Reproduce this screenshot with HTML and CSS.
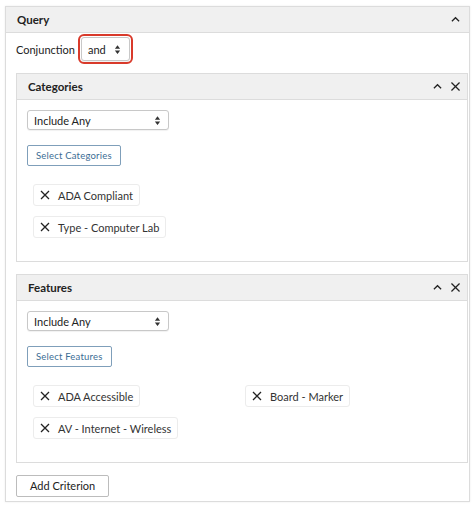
FILE: index.html
```html
<html>
	<head>
		<title>Query</title>
		<link rel="stylesheet" href="styles.css">
	</head>
	<body>
		<div class="panel outer">
			<div class="panel-head">
				<b>Query</b>
				<span class="tools">
					<svg class="ico" viewBox="0 0 10 10"><path d="M1 7 L5 3 L9 7"/></svg>
				</span>
			</div>
			<div class="outer-body">
				<div class="conj">
					<span>Conjunction</span>
					<span class="focus">
						<span class="select small">and <svg class="arrows" viewBox="0 0 8 12"><path d="M4 1 L7 5 L1 5 Z M4 11 L7 7 L1 7 Z"/></svg></span>
					</span>
				</div>

				<div class="panel inner">
					<div class="panel-head">
						<b>Categories</b>
						<span class="tools">
							<svg class="ico" viewBox="0 0 10 10"><path d="M1 7 L5 3 L9 7"/></svg>
							<svg class="ico" viewBox="0 0 10 10"><path d="M0.5 0.5 L9.5 9.5 M9.5 0.5 L0.5 9.5"/></svg>
						</span>
					</div>
					<div class="panel-body">
						<span class="select wide">Include Any <svg class="arrows" viewBox="0 0 8 12"><path d="M4 1 L7 5 L1 5 Z M4 11 L7 7 L1 7 Z"/></svg></span>
						<a class="btn-pick" href="#">Select Categories</a>
						<div class="chips one">
							<div><span class="chip"><svg viewBox="0 0 10 10"><path d="M1 1 L9 9 M9 1 L1 9"/></svg>ADA Compliant</span></div>
							<div><span class="chip"><svg viewBox="0 0 10 10"><path d="M1 1 L9 9 M9 1 L1 9"/></svg>Type - Computer Lab</span></div>
						</div>
					</div>
				</div>

				<div class="panel inner">
					<div class="panel-head">
						<b>Features</b>
						<span class="tools">
							<svg class="ico" viewBox="0 0 10 10"><path d="M1 7 L5 3 L9 7"/></svg>
							<svg class="ico" viewBox="0 0 10 10"><path d="M0.5 0.5 L9.5 9.5 M9.5 0.5 L0.5 9.5"/></svg>
						</span>
					</div>
					<div class="panel-body">
						<span class="select wide">Include Any <svg class="arrows" viewBox="0 0 8 12"><path d="M4 1 L7 5 L1 5 Z M4 11 L7 7 L1 7 Z"/></svg></span>
						<a class="btn-pick" href="#">Select Features</a>
						<div class="chips two">
							<div><span class="chip"><svg viewBox="0 0 10 10"><path d="M1 1 L9 9 M9 1 L1 9"/></svg>ADA Accessible</span></div>
							<div><span class="chip"><svg viewBox="0 0 10 10"><path d="M1 1 L9 9 M9 1 L1 9"/></svg>Board - Marker</span></div>
							<div><span class="chip"><svg viewBox="0 0 10 10"><path d="M1 1 L9 9 M9 1 L1 9"/></svg>AV - Internet - Wireless</span></div>
						</div>
					</div>
				</div>

				<a class="btn" href="#">Add Criterion</a>
			</div>
		</div>
	</body>
</html>
```

FILE: styles.css
```css
body
{
	margin:0;
	padding:6px 4px 6px 5px;
	font-family:Lato, sans-serif;
	font-size:11px;
	color:#222;
	background:white;
}
.panel
{
	border:1px solid #dcdcdc;
	background:white;
}
.outer
{
	box-sizing:border-box;
	height:496px;
	box-shadow:0 0 2px rgba(0,0,0,0.08);
}
.panel-head
{
	display:flex;
	align-items:center;
	height:25px;
	padding:0 9px 0 11px;
	background:#f0f0f0;
	border-bottom:1px solid #dcdcdc;
}
.panel-head b
{
	flex:1;
	font-size:11.5px;
}
.inner .panel-head
{
	padding-right:7px;
}
.tools
{
	display:flex;
	gap:9px;
	align-items:center;
}
.ico
{
	width:9px;
	height:9px;
	fill:none;
	stroke:#222;
	stroke-width:1.4;
}
.outer-body
{
	padding:0 1px 0 10px;
}
.conj
{
	display:flex;
	align-items:center;
	height:32px;
	gap:3px;
}
.focus
{
	display:inline-flex;
	border:2px solid #d93a2b;
	border-radius:6px;
	padding:1px;
}
.select
{
	display:inline-flex;
	align-items:center;
	justify-content:space-between;
	box-sizing:border-box;
	height:20px;
	padding:0 7px 0 6px;
	border:1px solid #c8c8c8;
	border-radius:3px;
	background:white;
	box-shadow:0 1px 1px rgba(0,0,0,0.06);
}
.small
{
	width:49px;
	height:24px;
	padding:0 8px 0 6px;
}
.wide
{
	width:142px;
}
.arrows
{
	width:7px;
	height:11px;
	fill:#333;
}
.inner
{
	margin-top:8px;
}
.inner + .inner
{
	margin-top:12px;
}
.panel-body
{
	display:flex;
	flex-direction:column;
	align-items:flex-start;
	padding:10px 10px 23px 10px;
}
.btn-pick
{
	box-sizing:border-box;
	height:21px;
	line-height:19px;
	margin-top:15px;
	padding:0 8px;
	font-size:9.5px;
	letter-spacing:0.2px;
	color:#3b6d94;
	text-decoration:none;
	border:1px solid #7f9fba;
	border-radius:2px;
}
.chips
{
	display:grid;
	row-gap:10px;
	align-self:stretch;
	margin-top:18px;
	padding-left:6px;
}
.two
{
	grid-template-columns:1fr 1fr;
}
.chip
{
	display:inline-flex;
	align-items:center;
	height:22px;
	box-sizing:border-box;
	padding:0 6px 0 6px;
	color:#333;
	border:1px solid #ececec;
	border-radius:3px;
	background:white;
}
.chip svg
{
	width:10px;
	height:10px;
	margin-right:8px;
	stroke:#222;
	stroke-width:1.3;
}
.btn
{
	display:inline-block;
	box-sizing:border-box;
	height:22px;
	line-height:20px;
	margin-top:12px;
	padding:0 13px;
	color:#222;
	text-decoration:none;
	border:1px solid #bcbcbc;
	border-radius:2px;
	background:white;
}
```
